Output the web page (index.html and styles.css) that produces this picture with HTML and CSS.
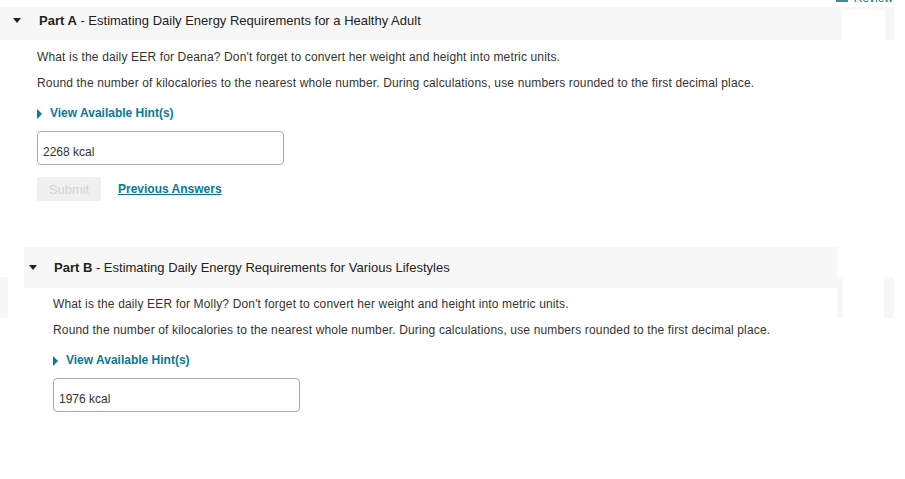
FILE: index.html
```html
<!DOCTYPE html>
<html lang="en">
<head>
    <meta charset="UTF-8">
    <title>Part A / Part B</title>
    <link rel="stylesheet" href="styles.css">
</head>
<body>
    <div class="topbar">
        <a class="review"><span class="review-icon"></span>Review</a>
    </div>

    <section class="part part-a">
        <div class="part-head">
            <div class="head-label">
                <span class="caret"></span>
                <h2><b>Part A</b> - Estimating Daily Energy Requirements for a Healthy Adult</h2>
            </div>
            <span class="head-gap"></span>
        </div>
        <div class="part-body">
            <p>What is the daily EER for Deana? Don't forget to convert her weight and height into metric units.</p>
            <p>Round the number of kilocalories to the nearest whole number. During calculations, use numbers rounded to the first decimal place.</p>
            <a class="hint"><span class="hint-caret"></span>View Available Hint(s)</a>
            <div class="answer">2268 kcal</div>
            <div class="actions">
                <button disabled>Submit</button>
                <a class="prev">Previous Answers</a>
            </div>
        </div>
    </section>

    <!-- second capture stacked over the first one -->
    <div class="stack">
        <div class="band-under"><span class="head-gap"></span></div>

        <section class="part part-b">
            <div class="part-head">
                <div class="head-label">
                    <span class="caret"></span>
                    <h2><b>Part B</b> - Estimating Daily Energy Requirements for Various Lifestyles</h2>
                </div>
            </div>
            <div class="part-body">
                <p>What is the daily EER for Molly? Don't forget to convert her weight and height into metric units.</p>
                <p>Round the number of kilocalories to the nearest whole number. During calculations, use numbers rounded to the first decimal place.</p>
                <a class="hint"><span class="hint-caret"></span>View Available Hint(s)</a>
                <div class="answer">1976 kcal</div>
            </div>
        </section>
    </div>
</body>
</html>
```

FILE: styles.css
```css
:root {
    --band: #f7f7f7;
    --teal: #06799a;
    --text: #333;
}
html, body {
    margin: 0;
    padding: 0;
    background: #fff;
    font-family: "Liberation Sans", Arial, sans-serif;
    color: var(--text);
}
.topbar {
    height: 7px;
    overflow: hidden;
    display: flex;
    justify-content: flex-end;
    padding-right: 12px;
}
.review {
    display: flex;
    align-items: baseline;
    gap: 6px;
    margin-top: -8px;
    font-size: 12px;
    line-height: 12px;
    color: var(--teal);
}
.review-icon {
    display: inline-block;
    width: 12px;
    height: 10px;
    background: linear-gradient(#8fb6c2, #3b8196);
}

/* collapsible part header */
.part-head {
    display: flex;
    background: var(--band);
}
.head-label {
    flex: 1;
    display: flex;
    align-items: center;
}
.caret {
    width: 0;
    height: 0;
    border-left: 4px solid transparent;
    border-right: 4px solid transparent;
    border-top: 5px solid #222;
    margin-right: 18px;
}
.part-head h2 {
    margin: 0;
    font-size: 13px;
    font-weight: normal;
    color: #222;
}
.head-gap {
    width: 43px;
    margin: 3px 9px 0 0;
    background: #fff;
}

.part-a .part-head {
    width: 894px;
    height: 33px;
}
.part-a .head-label {
    padding-left: 13px;
    margin-bottom: 7px;
}
.part-a .part-body {
    padding: 10px 0 0 37px;
}

.part-body p {
    margin: 0 0 11px;
    font-size: 12px;
    line-height: 15px;
    letter-spacing: 0.15px;
}
.hint {
    display: flex;
    align-items: center;
    gap: 8px;
    margin-top: 15px;
    font-size: 12px;
    line-height: 15px;
    font-weight: bold;
    color: var(--teal);
}
.hint-caret {
    width: 0;
    height: 0;
    border-top: 5px solid transparent;
    border-bottom: 5px solid transparent;
    border-left: 5px solid var(--teal);
}
.answer {
    width: 235px;
    margin-top: 10px;
    padding: 13px 5px 5px;
    border: 1px solid #aaa;
    border-radius: 4px;
    font-size: 12px;
    line-height: 14px;
    color: #333;
}
.actions {
    display: flex;
    align-items: center;
    gap: 17px;
    margin-top: 12px;
}
.actions button {
    width: 64px;
    height: 24px;
    padding: 0;
    border: none;
    border-radius: 2px;
    background: #f0f0f0;
    color: #d4d4d4;
    font-family: inherit;
    font-size: 13px;
}
.prev {
    font-size: 12px;
    font-weight: bold;
    color: var(--teal);
    text-decoration: underline;
}

.stack {
    display: grid;
    margin-top: 46px;
}
.stack > * {
    grid-area: 1 / 1;
}
.band-under {
    display: flex;
    justify-content: flex-end;
    align-self: start;
    width: 894px;
    height: 41px;
    margin-top: 30px;
    background: var(--band);
}
.band-under .head-gap {
    width: 41px;
    margin: 0 10px 0 0;
}
.part-b {
    position: relative;
    width: 829px;
    min-height: 232px;
    margin-left: 8px;
    background: #fff;
}
.part-b .part-head {
    height: 41px;
    margin-left: 16px;
}
.part-b .head-label {
    padding-left: 5px;
}
.part-b .caret {
    margin-right: 17px;
}
.part-b .part-body {
    padding: 9px 0 0 45px;
}
```
